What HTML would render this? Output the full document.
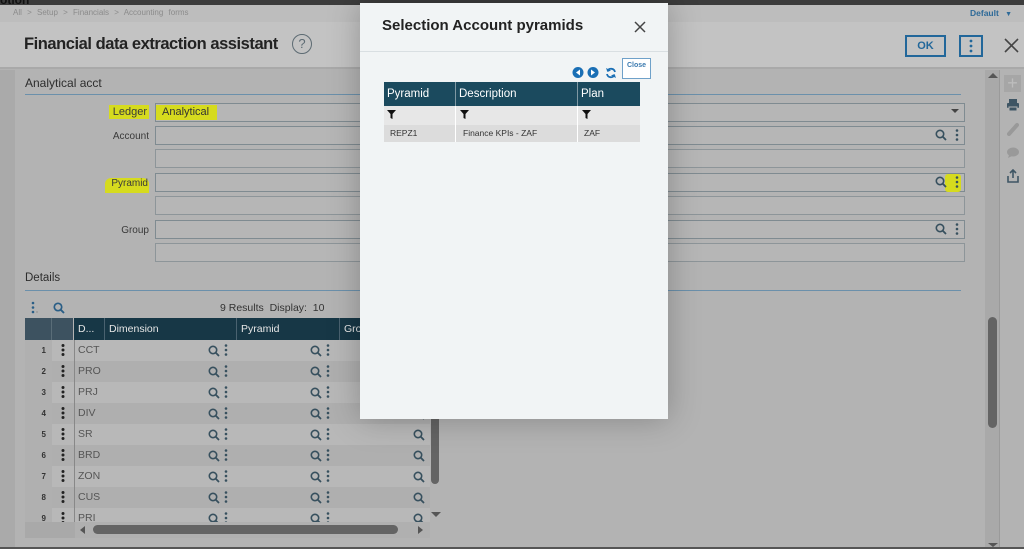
<!DOCTYPE html>
<html><head><meta charset="utf-8"><style>
*{margin:0;padding:0;box-sizing:border-box}
body{width:1024px;height:549px;overflow:hidden;position:relative;background:#b3b3b3;font-family:"Liberation Sans",sans-serif;color:#333}
.a{position:absolute}
.fld{position:absolute;left:155px;width:810px;height:19px;border:1px solid #7f8b91;background:#b6b6b6}
.fld2{position:absolute;left:155px;width:810px;height:19px;border:1px solid #8d9599;background:#b6b6b6}
.lbl{position:absolute;width:149px;left:0;text-align:right;font-size:10px;color:#3a3a3a}
.hl{background:#d6db1e}
.row{position:absolute;left:25px;width:405px;height:21px;font-size:10px}
.row .n{position:absolute;left:0;width:27px;height:21px;text-align:right;padding-right:6px;line-height:21px;font-weight:bold;font-size:8px;color:#333;background:inherit}
.row .c{position:absolute;left:53px;line-height:21px;color:#555;font-size:10.5px}
.row .sep{position:absolute;left:49px;top:0;width:1px;height:21px;background:#888}
.th{position:absolute;top:318px;height:22px;background:#173746;color:#e6e6e6;font-size:10.5px;line-height:22px;padding-left:4px;border-right:1px solid #4a6270}
.mth{position:absolute;top:82px;height:24px;background:#1b4a5e;color:#fff;font-size:11.5px;line-height:24px;padding-left:3px;border-right:1px solid #7f98a3}
.mf{position:absolute;top:106px;height:19px;background:#e7e7e7;border-right:1px solid #fff}
.md{position:absolute;top:125px;height:17px;background:#dcdcdc;font-size:8.5px;line-height:17px;color:#333;border-right:1px solid #fff;padding-left:6px}
</style></head><body>

<div class="a" style="left:0;top:0;width:1024px;height:5px;background:#3c3c3c"></div>
<div class="a" style="left:0;top:-7px;font-size:12px;font-weight:bold;color:#111">otion</div>
<div class="a" style="left:0;top:5px;width:1024px;height:17px;background:#bdbdbd"></div>
<div class="a" style="left:13px;top:8px;font-size:8px;color:#8b8b8b;word-spacing:3px">All &gt; Setup &gt; Financials &gt; Accounting forms</div>
<div class="a" style="left:970px;top:8px;font-size:8.5px;font-weight:bold;color:#2e6a98">Default <span style="font-size:7px;margin-left:4px">▼</span></div>
<div class="a" style="left:0;top:22px;width:1024px;height:47px;background:#c3c3c3;border-bottom:2px solid #a9a9a9"></div>
<div class="a" style="left:24px;top:35px;font-size:16.5px;letter-spacing:-0.45px;font-weight:bold;color:#232323">Financial data extraction assistant</div>
<div class="a" style="left:292px;top:34px;width:20px;height:20px;border:1.5px solid #5d6b73;border-radius:50%;text-align:center;font-size:13px;line-height:17px;color:#5d6b73">?</div>
<div class="a" style="left:905px;top:35px;width:41px;height:22px;border:2px solid #22679a;text-align:center;font-size:11px;font-weight:bold;color:#22679a;line-height:18px">OK</div>
<div class="a" style="left:959px;top:35px;width:24px;height:22px;border:2px solid #22679a"></div>
<svg class="a" style="left:968px;top:39px" width="6" height="14"><circle cx="3" cy="2" r="1.4" fill="#22679a"/><circle cx="3" cy="7" r="1.4" fill="#22679a"/><circle cx="3" cy="12" r="1.4" fill="#22679a"/></svg>
<svg class="a" style="left:1004px;top:38px" width="15" height="15"><path d="M1 1L14 14M14 1L1 14" stroke="#444" stroke-width="1.6"/></svg>

<div class="a" style="left:0;top:70px;width:15px;height:479px;background:#aaaaaa"></div>
<div class="a" style="left:985px;top:70px;width:14px;height:479px;background:#a9a9a9"></div>
<div class="a" style="left:988px;top:317px;width:9px;height:111px;border-radius:5px;background:#646464"></div>
<div class="a" style="left:988px;top:73px;width:0;height:0;border-left:5px solid transparent;border-right:5px solid transparent;border-bottom:5px solid #555"></div>
<div class="a" style="left:988px;top:543px;width:0;height:0;border-left:5px solid transparent;border-right:5px solid transparent;border-top:4px solid #555"></div>
<div class="a" style="left:999px;top:70px;width:1px;height:479px;background:#9a9a9a"></div>
<div class="a" style="left:1004px;top:75px;width:17px;height:17px;background:#a6a6a6;color:#bdbdbd;font-size:18px;line-height:16px;text-align:center">+</div>
<svg class="a" style="left:1006px;top:98px" width="14" height="14"><rect x="3" y="1" width="8" height="4" fill="#3e5564"/><rect x="1" y="5" width="12" height="5" rx="1" fill="#3e5564"/><rect x="3" y="9" width="8" height="4" fill="#3e5564" stroke="#b3b3b3"/></svg>
<svg class="a" style="left:1007px;top:122px" width="12" height="14"><path d="M2 12L10 3" stroke="#999" stroke-width="4" stroke-linecap="round"/></svg>
<svg class="a" style="left:1006px;top:147px" width="14" height="12"><ellipse cx="7" cy="5" rx="6" ry="4.5" fill="#999"/><path d="M3 8L2 11L6 9Z" fill="#999"/></svg>
<svg class="a" style="left:1006px;top:169px" width="14" height="15"><path d="M7 1L7 9M4 4L7 1L10 4" stroke="#3e5564" stroke-width="1.6" fill="none"/><path d="M2 7L2 13L12 13L12 7" stroke="#3e5564" stroke-width="1.6" fill="none"/></svg>
<div class="a" style="left:0;top:547px;width:1024px;height:2px;background:#555"></div>

<div class="a" style="left:25px;top:76px;font-size:12px;color:#2d2d2d">Analytical acct</div>
<div class="a" style="left:25px;top:94px;width:936px;height:1px;background:#6b90ab"></div>
<div class="fld" style="top:103px"><span style="position:absolute;left:0;top:1px;font-size:11px;padding:0 8px 0 6px;line-height:15px" class="hl">Analytical</span><span style="position:absolute;right:5px;top:5px;width:0;height:0;border-left:4px solid transparent;border-right:4px solid transparent;border-top:4px solid #444"></span></div>
<div class="lbl" style="top:106px"><span class="hl" style="padding:1px 2px 1px 4px;font-size:11px">Ledger</span></div>
<div class="lbl" style="top:131px">Account</div>
<div class="fld" style="top:126px"></div>
<div class="fld2" style="top:149px"></div>
<div class="lbl" style="top:178px"><span class="hl" style="padding:0 1px 4px 6px;border-radius:6px 6px 0 0">Pyramid</span></div>
<div class="fld" style="top:173px"></div>
<div class="fld2" style="top:196px"></div>
<div class="lbl" style="top:225px">Group</div>
<div class="fld" style="top:220px"></div>
<div class="fld2" style="top:243px"></div>
<div class="a hl" style="left:945px;top:174px;width:16px;height:18px;border-radius:3px"></div>

<svg class="a" style="left:935px;top:129px" width="12" height="12"><circle cx="5" cy="5" r="3.7" stroke="#37505e" stroke-width="1.6" fill="none"/><path d="M7.8 7.8L11 11" stroke="#37505e" stroke-width="1.8"/></svg>
<svg class="a" style="left:954px;top:128px" width="6" height="14"><circle cx="3" cy="2.5" r="1.3" fill="#37505e"/><circle cx="3" cy="7" r="1.3" fill="#37505e"/><circle cx="3" cy="11.5" r="1.3" fill="#37505e"/></svg>
<svg class="a" style="left:935px;top:176px" width="12" height="12"><circle cx="5" cy="5" r="3.7" stroke="#37505e" stroke-width="1.6" fill="none"/><path d="M7.8 7.8L11 11" stroke="#37505e" stroke-width="1.8"/></svg>
<svg class="a" style="left:954px;top:175px" width="6" height="14"><circle cx="3" cy="2.5" r="1.3" fill="#37505e"/><circle cx="3" cy="7" r="1.3" fill="#37505e"/><circle cx="3" cy="11.5" r="1.3" fill="#37505e"/></svg>
<svg class="a" style="left:935px;top:223px" width="12" height="12"><circle cx="5" cy="5" r="3.7" stroke="#37505e" stroke-width="1.6" fill="none"/><path d="M7.8 7.8L11 11" stroke="#37505e" stroke-width="1.8"/></svg>
<svg class="a" style="left:954px;top:222px" width="6" height="14"><circle cx="3" cy="2.5" r="1.3" fill="#37505e"/><circle cx="3" cy="7" r="1.3" fill="#37505e"/><circle cx="3" cy="11.5" r="1.3" fill="#37505e"/></svg>

<div class="a" style="left:25px;top:272px;font-size:11.5px;color:#2d2d2d">Details</div>
<div class="a" style="left:25px;top:290px;width:936px;height:1px;background:#6b90ab"></div>
<svg class="a" style="left:30px;top:301px" width="8" height="13"><circle cx="3" cy="2" r="1.3" fill="#2a5e86"/><circle cx="3" cy="6.5" r="1.3" fill="#2a5e86"/><circle cx="3" cy="11" r="1.3" fill="#2a5e86"/><circle cx="7" cy="11" r="0.5" fill="#555"/></svg>
<svg class="a" style="left:53px;top:302px" width="12" height="12"><circle cx="5" cy="5" r="3.7" stroke="#2a5e86" stroke-width="1.7" fill="none"/><path d="M7.8 7.8L11 11" stroke="#2a5e86" stroke-width="1.9"/></svg>
<div class="a" style="left:220px;top:302px;font-size:10.5px;color:#333">9 Results&nbsp; Display:&nbsp; 10</div>

<div class="a" style="left:25px;top:318px;width:27px;height:22px;background:#3d5260;border-right:1px solid #5a6d78"></div>
<div class="a" style="left:52px;top:318px;width:21px;height:22px;background:#3d5260"></div>
<div class="th" style="left:74px;width:31px">D...</div>
<div class="th" style="left:105px;width:132px">Dimension</div>
<div class="th" style="left:237px;width:103px">Pyramid</div>
<div class="th" style="left:340px;width:90px;border:none">Gro</div>

<div class="a" style="left:25px;top:340px;width:405px;height:182px;overflow:hidden">
<div id="rows"></div>
</div>

<div class="a" style="left:25px;top:522px;width:405px;height:16px;background:#b0b0b0"></div>
<div class="a" style="left:25px;top:522px;width:50px;height:16px;background:#a9a9a9"></div>
<div class="a" style="left:80px;top:526px;width:0;height:0;border-top:4px solid transparent;border-bottom:4px solid transparent;border-right:5px solid #555"></div>
<div class="a" style="left:93px;top:525px;width:305px;height:9px;border-radius:5px;background:#646464"></div>
<div class="a" style="left:418px;top:526px;width:0;height:0;border-top:4px solid transparent;border-bottom:4px solid transparent;border-left:5px solid #555"></div>
<div class="a" style="left:431px;top:400px;width:8px;height:84px;border-radius:4px;background:#646464"></div>
<div class="a" style="left:431px;top:512px;width:0;height:0;border-left:5px solid transparent;border-right:5px solid transparent;border-top:5px solid #555"></div>

<script>
var codes=["CCT","PRO","PRJ","DIV","SR","BRD","ZON","CUS","PRI"];
var s="";
var q='<svg width="12" height="12" style="position:absolute;top:5px;left:LEFTpx"><circle cx="5" cy="5" r="3.7" stroke="#37505e" stroke-width="1.6" fill="none"/><path d="M7.8 7.8L11 11" stroke="#37505e" stroke-width="1.8"/></svg>';
var d='<svg width="6" height="14" style="position:absolute;top:3px;left:LEFTpx"><circle cx="3" cy="2.5" r="1.3" fill="#37505e"/><circle cx="3" cy="7" r="1.3" fill="#37505e"/><circle cx="3" cy="11.5" r="1.3" fill="#37505e"/></svg>';
var bd='<svg width="6" height="14" style="position:absolute;top:3px;left:35px"><circle cx="3" cy="2.5" r="1.5" fill="#222"/><circle cx="3" cy="7" r="1.5" fill="#222"/><circle cx="3" cy="11.5" r="1.5" fill="#222"/></svg>';
for(var i=0;i<9;i++){
 var bg=i%2?"#afafaf":"#b8b8b8";
 s+='<div class="row" style="left:0;top:'+(i*21)+'px;background:'+bg+'"><div class="n" style="background:#b0b0b0">'+(i+1)+'</div>'+bd+'<div class="sep"></div><div class="c">'+codes[i]+'</div>'+q.replace("LEFT",183)+d.replace("LEFT",198)+q.replace("LEFT",285)+d.replace("LEFT",300)+q.replace("LEFT",388)+'</div>';
}
document.getElementById("rows").innerHTML=s;
</script>

<div class="a" style="left:360px;top:3px;width:308px;height:416px;background:#f1f4f5;box-shadow:0 0 30px rgba(0,0,0,0.25)"></div>
<div class="a" style="left:382px;top:17px;font-size:15px;font-weight:bold;color:#222">Selection Account pyramids</div>
<svg class="a" style="left:634px;top:21px" width="12" height="12"><path d="M1 1L11 11M11 1L1 11" stroke="#444" stroke-width="1.5"/></svg>
<div class="a" style="left:360px;top:51px;width:308px;height:1px;background:#d9dfe2"></div>
<svg class="a" style="left:572px;top:66px" width="28" height="13"><circle cx="6" cy="6.5" r="5.5" fill="#1a6fb5"/><path d="M8 3.5L4 6.5L8 9.5Z" fill="#fff"/><circle cx="21" cy="6.5" r="5.5" fill="#1a6fb5"/><path d="M19 3.5L23 6.5L19 9.5Z" fill="#fff"/></svg>
<svg class="a" style="left:605px;top:67px" width="12" height="12"><path d="M10 5A4 4 0 0 0 2.5 4M2 7A4 4 0 0 0 9.5 8" stroke="#1a6fb5" stroke-width="1.8" fill="none"/><path d="M1 1L2.5 5L6 3.5Z M11 11L9.5 7L6 8.5Z" fill="#1a6fb5"/></svg>
<div class="a" style="left:622px;top:58px;width:29px;height:21px;border:1px solid #6fa1c9;background:#fff;font-size:7px;color:#3c7bb0;text-align:center;line-height:14px;font-weight:bold">Close</div>
<div class="mth" style="left:384px;width:72px">Pyramid</div>
<div class="mth" style="left:456px;width:122px">Description</div>
<div class="mth" style="left:578px;width:62px;border:none">Plan</div>
<div class="mf" style="left:384px;width:72px"></div>
<div class="mf" style="left:456px;width:122px"></div>
<div class="mf" style="left:578px;width:62px;border:none"></div>
<svg class="a" style="left:387px;top:110px" width="9" height="10"><path d="M0 0H9L5.5 4V9L3.5 8V4Z" fill="#111"/></svg>
<svg class="a" style="left:460px;top:110px" width="9" height="10"><path d="M0 0H9L5.5 4V9L3.5 8V4Z" fill="#111"/></svg>
<svg class="a" style="left:582px;top:110px" width="9" height="10"><path d="M0 0H9L5.5 4V9L3.5 8V4Z" fill="#111"/></svg>
<div class="md" style="left:384px;width:72px">REPZ1</div>
<div class="md" style="left:456px;width:122px;padding-left:7px">Finance KPIs - ZAF</div>
<div class="md" style="left:578px;width:62px;border:none">ZAF</div>
</body></html>
